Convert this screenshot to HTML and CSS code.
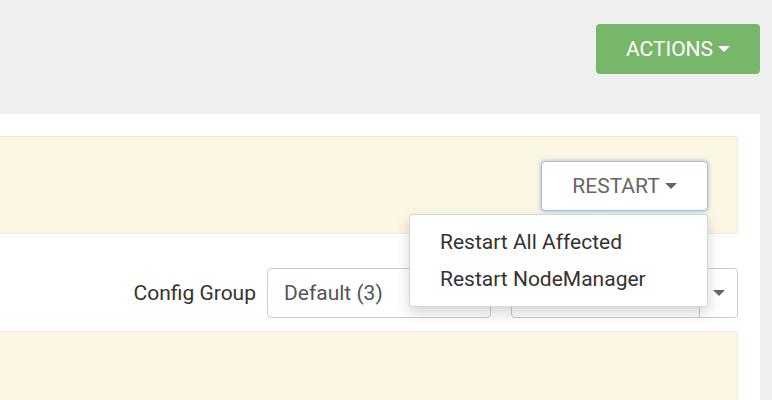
FILE: index.html
```html
<!DOCTYPE html>
<html>
<head>
<meta charset="utf-8">
<link rel="stylesheet" href="styles.css">
</head>
<body>
<div class="page">
  <div class="header">
    <button class="btn-actions">ACTIONS <span class="caret caret-white"></span></button>
  </div>
  <div class="panel">
    <div class="alert">
      <div class="restart-wrap">
        <button class="btn-restart">RESTART <span class="caret caret-gray"></span></button>
        <ul class="menu">
          <li>Restart All Affected</li>
          <li>Restart NodeManager</li>
        </ul>
      </div>
    </div>
    <div class="config-row">
      <span class="label">Config Group</span>
      <div class="select sel-1">Default (3)</div>
      <div class="select sel-2"><span class="sel-body"></span><span class="sel-toggle"><span class="caret caret-dark"></span></span></div>
    </div>
    <div class="alert alert-2"></div>
  </div>
</div>
</body>
</html>
```
FILE: styles.css
```css
html, body {
  margin: 0;
  padding: 0;
  background: #efefef;
  font-family: Roboto, "Liberation Sans", sans-serif;
  overflow: hidden;
}
.page {
  width: 800px;
  margin-left: -40px;
}
.header {
  height: 114px;
  display: flex;
  justify-content: flex-end;
  align-items: flex-start;
  width: 800px;
}
.btn-actions {
  margin-top: 24px;
  width: 164px;
  height: 50px;
  background: #77b76a;
  border: none;
  border-radius: 4px;
  color: #fff;
  font-family: Roboto, "Liberation Sans", sans-serif;
  font-size: 21px;
  display: flex;
  align-items: center;
  justify-content: center;
  gap: 4px;
  padding: 0;
}
.caret {
  display: inline-block;
  width: 0;
  height: 0;
  border-left: 6px solid transparent;
  border-right: 6px solid transparent;
  border-top: 6px solid #fff;
}
.caret-white { border-top-color: #fff; margin-left: 1px; }
.caret-gray { border-left-width: 6px; border-right-width: 6px; border-top: 6px solid #666; margin-left: 1px; }
.caret-dark { border-left-width: 6px; border-right-width: 6px; border-top: 6px solid #666; }
.panel {
  background: #fff;
  width: 800px;
  height: 286px;
  padding: 22px 22px 0 0;
  box-sizing: border-box;
  overflow: hidden;
}
.alert {
  background: #fbf7e4;
  border: 1px solid #f4ebcf;
  border-radius: 4px;
  height: 98px;
  box-sizing: border-box;
  display: flex;
  justify-content: flex-end;
  align-items: flex-start;
  padding: 24px 29px 0 0;
}
.restart-wrap {
  position: relative;
}
.btn-restart {
  width: 167px;
  height: 50px;
  background: #fff;
  border: 1px solid #9fc2e4;
  box-shadow: 0 0 4px rgba(102, 160, 220, 0.7);
  border-radius: 4px;
  color: #666;
  font-family: Roboto, "Liberation Sans", sans-serif;
  font-size: 21px;
  display: flex;
  align-items: center;
  justify-content: center;
  gap: 4px;
  padding: 0;
}
.menu {
  position: absolute;
  top: 53px;
  right: 0;
  width: 299px;
  box-sizing: border-box;
  margin: 0;
  padding: 9px 0 8px 0;
  list-style: none;
  background: #fff;
  border: 1px solid #d6d6d6;
  border-radius: 3px;
  box-shadow: 0 6px 14px rgba(0, 0, 0, 0.17);
  z-index: 5;
}
.menu li {
  font-size: 21px;
  color: #333;
  padding-left: 30px;
  line-height: 37px;
}
.config-row {
  display: flex;
  justify-content: flex-end;
  align-items: center;
  margin-top: 34px;
  height: 50px;
}
.label {
  font-size: 21px;
  color: #333;
  margin-right: 11px;
}
.select {
  height: 50px;
  box-sizing: border-box;
  border: 1px solid #ccc;
  border-radius: 4px;
  background: #fff;
  font-size: 21px;
  color: #555;
}
.sel-1 {
  width: 224px;
  padding: 12px 0 0 16px;
  margin-right: 20px;
}
.sel-2 {
  width: 227px;
  display: flex;
}
.sel-body {
  flex: 1;
}
.sel-toggle {
  width: 37px;
  border-left: 1px solid #ccc;
  display: flex;
  align-items: center;
  justify-content: center;
}
.alert-2 {
  margin-top: 13px;
  height: 100px;
}
```
